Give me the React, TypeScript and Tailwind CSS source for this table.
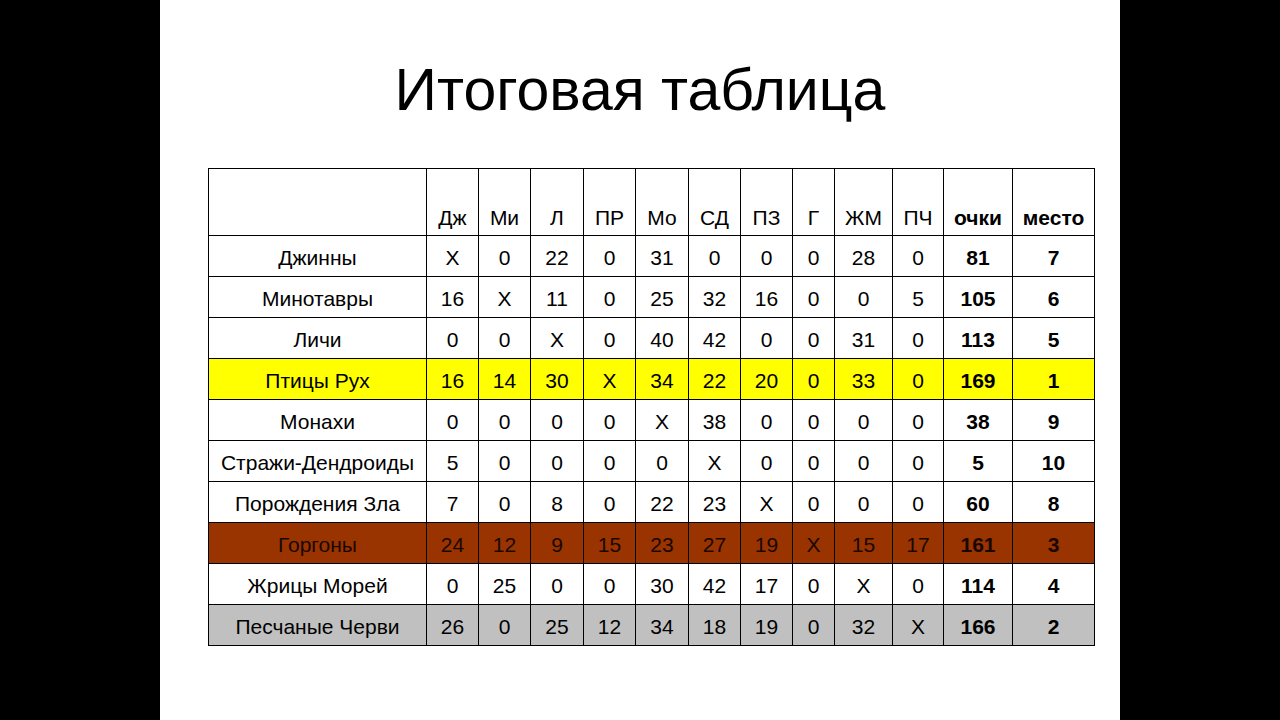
const headers = ['Дж', 'Ми', 'Л', 'ПР', 'Мо', 'СД', 'ПЗ', 'Г', 'ЖМ', 'ПЧ'];

const widths = [218, 52, 52, 53, 52, 53, 52, 52, 42, 58, 51, 69, 82];

type Row = { name: string; cells: string[]; score: string; place: string; bg: string };

const rows: Row[] = [
  { name: 'Джинны', cells: ['X', '0', '22', '0', '31', '0', '0', '0', '28', '0'], score: '81', place: '7', bg: 'bg-white' },
  { name: 'Минотавры', cells: ['16', 'X', '11', '0', '25', '32', '16', '0', '0', '5'], score: '105', place: '6', bg: 'bg-white' },
  { name: 'Личи', cells: ['0', '0', 'X', '0', '40', '42', '0', '0', '31', '0'], score: '113', place: '5', bg: 'bg-white' },
  { name: 'Птицы Рух', cells: ['16', '14', '30', 'X', '34', '22', '20', '0', '33', '0'], score: '169', place: '1', bg: 'bg-[#ffff00]' },
  { name: 'Монахи', cells: ['0', '0', '0', '0', 'X', '38', '0', '0', '0', '0'], score: '38', place: '9', bg: 'bg-white' },
  { name: 'Стражи-Дендроиды', cells: ['5', '0', '0', '0', '0', 'X', '0', '0', '0', '0'], score: '5', place: '10', bg: 'bg-white' },
  { name: 'Порождения Зла', cells: ['7', '0', '8', '0', '22', '23', 'X', '0', '0', '0'], score: '60', place: '8', bg: 'bg-white' },
  { name: 'Горгоны', cells: ['24', '12', '9', '15', '23', '27', '19', 'X', '15', '17'], score: '161', place: '3', bg: 'bg-[#993300] text-[#1a0800]' },
  { name: 'Жрицы Морей', cells: ['0', '25', '0', '0', '30', '42', '17', '0', 'X', '0'], score: '114', place: '4', bg: 'bg-white' },
  { name: 'Песчаные Черви', cells: ['26', '0', '25', '12', '34', '18', '19', '0', '32', 'X'], score: '166', place: '2', bg: 'bg-[#c0c0c0]' },
];

export default function App() {
  return (
    <div className="flex h-[720px] w-[1280px] bg-black font-['Liberation_Sans',Arial,sans-serif] text-black">
      <div className="ml-[160px] flex w-[960px] flex-col bg-white">
        <h1 className="mt-[56px] text-center text-[59px] leading-[68px]">Итоговая таблица</h1>
        <table className="mt-[44px] ml-[48px] w-[887px] table-fixed border-collapse text-[21px]">
          <colgroup>
            {widths.map((w, i) => (
              <col key={i} style={{ width: w }} />
            ))}
          </colgroup>
          <thead>
            <tr className="h-[67px]">
              <th className="border border-black" />
              {headers.map((h) => (
                <th key={h} className="border border-black pb-[2px] text-center align-bottom font-normal">
                  {h}
                </th>
              ))}
              <th className="border border-black pb-[2px] text-center align-bottom font-bold">очки</th>
              <th className="border border-black pb-[2px] text-center align-bottom font-bold">место</th>
            </tr>
          </thead>
          <tbody>
            {rows.map((r) => (
              <tr key={r.name} className={`h-[41px] ${r.bg}`}>
                <td className="border border-black pt-[3px] text-center">{r.name}</td>
                {r.cells.map((c, i) => (
                  <td key={i} className="border border-black pt-[3px] text-center">
                    {c}
                  </td>
                ))}
                <td className="border border-black pt-[3px] text-center font-bold">{r.score}</td>
                <td className="border border-black pt-[3px] text-center font-bold">{r.place}</td>
              </tr>
            ))}
          </tbody>
        </table>
      </div>
    </div>
  );
}
